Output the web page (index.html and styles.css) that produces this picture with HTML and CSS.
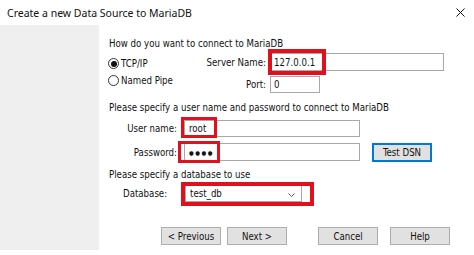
FILE: index.html
```html
<!DOCTYPE html>
<html>
<head>
<meta charset="utf-8">
<link rel="stylesheet" href="styles.css">
</head>
<body>
<div class="window">
  <div class="titlebar">
    <span class="title">Create a new Data Source to MariaDB</span>
    <svg class="close" width="9" height="9" viewBox="0 0 9 9"><path d="M0.5 0.5 L8.5 8.5 M8.5 0.5 L0.5 8.5" stroke="#111" stroke-width="1" fill="none"/></svg>
  </div>
  <div class="main">
    <div class="side"></div>
    <div class="content">
      <p class="q q1">How do you want to connect to MariaDB</p>
      <div class="conn">
        <div class="radios">
          <div class="radio"><span class="dot checked"></span>TCP/IP</div>
          <div class="radio"><span class="dot"></span>Named Pipe</div>
        </div>
        <div class="fields">
          <span class="lbl">Server Name:</span>
          <span class="tb server">127.0.0.1<span class="hl hl-server"></span></span>
          <span class="lbl">Port:</span>
          <span class="tb port">0</span>
        </div>
      </div>
      <p class="q q2">Please specify a user name and password to connect to MariaDB</p>
      <div class="form-row row-user">
        <span class="lbl">User name:</span>
        <span class="tb wide">root<span class="hl hl-user"></span></span>
      </div>
      <div class="form-row row-pass">
        <span class="lbl">Password:</span>
        <span class="tb wide pass"><span class="dots">●●●●</span><span class="hl hl-pass"></span></span>
        <span class="btn test">Test DSN</span>
      </div>
      <p class="q q3">Please specify a database to use</p>
      <div class="form-row row-db">
        <span class="lbl db-lbl">Database:</span>
        <span class="combo">test_db
          <svg class="chev" width="7" height="4" viewBox="0 0 7 4"><path d="M0.5 0.5 L3.5 3.5 L6.5 0.5" stroke="#555" stroke-width="1" fill="none"/></svg>
          <span class="hl hl-db"></span>
        </span>
      </div>
      <div class="buttons">
        <span class="btn">&lt; Previous</span>
        <span class="btn">Next &gt;</span>
        <span class="btn cancel">Cancel</span>
        <span class="btn">Help</span>
      </div>
    </div>
  </div>
</div>
</body>
</html>
```

FILE: styles.css
```css
* { box-sizing: border-box; }
html, body { margin: 0; padding: 0; background: #fff; }
body {
  width: 474px;
  height: 255px;
  overflow: hidden;
  font-family: "DejaVu Sans Condensed", "DejaVu Sans", sans-serif;
  font-size: 9.6px;
  color: #111;
}
.window { width: 474px; height: 255px; background: #fff; }
.titlebar {
  height: 25px;
  display: flex;
  align-items: center;
  justify-content: space-between;
  padding: 0 9px 0 7px;
}
.title {
  font-family: "Noto Sans", sans-serif;
  font-size: 10.5px;
  color: #111;
  margin-top: 1px;
}
.close { margin-top: -1px; }
.main { display: flex; height: 225px; }
.side { width: 99px; height: 225px; background: #efefef; }
.content { flex: 1; padding-left: 10px; display: flex; flex-direction: column; }
.q { margin: 0; height: 14px; line-height: 14px; white-space: nowrap; }
.q1 { margin-top: 12px; }
.conn { display: flex; margin-top: 2px; height: 40px; }
.radios { width: 98px; flex: none; padding-top: 2px; margin-left: -1px; }
.radio { height: 17px; display: flex; align-items: center; white-space: nowrap; }
.dot {
  width: 11px; height: 11px;
  border: 1px solid #333;
  border-radius: 50%;
  margin-right: 2px;
  display: flex; align-items: center; justify-content: center;
}
.dot.checked::after {
  content: "";
  width: 6px; height: 6px; border-radius: 50%; background: #111;
}
.lbl { white-space: nowrap; }
.fields {
  display: grid;
  grid-template-columns: 60px auto;
  grid-template-rows: 18px 17px;
  row-gap: 5px;
  column-gap: 4px;
  align-items: center;
  justify-items: start;
}
.fields .lbl { justify-self: end; }
.tb {
  position: relative;
  display: flex;
  align-items: center;
  border: 1px solid #a8a8a8;
  background: #fff;
  padding-left: 3px;
  height: 100%;
}
.server { width: 174px; }
.port { width: 50px; }
.q2 { margin-top: 8px; }
.form-row {
  display: grid;
  grid-template-columns: 68px 176px auto;
  column-gap: 7px;
  align-items: center;
  justify-items: start;
}
.form-row .lbl { justify-self: end; }
.row-user { margin-top: 5px; height: 17px; }
.row-pass { margin-top: 6px; height: 19px; }
.row-pass .tb { height: 18px; align-self: start; }
.tb.wide { width: 176px; padding-left: 4px; }
.dots { font-size: 6px; letter-spacing: 1.5px; margin-top: 1px; }
.btn {
  display: flex; align-items: center; justify-content: center;
  width: 60px; height: 18px;
  background: #e1e1e1;
  border: 1px solid #adadad;
  white-space: nowrap;
}
.test {
  height: 19px;
  margin-left: 5px;
  border: 1px solid #0078d7;
  box-shadow: inset 0 0 0 1px #0078d7;
}
.q3 { margin-top: 6px; }
.row-db { margin-top: 3px; height: 17px; }
.row-db .db-lbl { justify-self: start; margin-left: 14px; }
.combo {
  position: relative;
  width: 117px; height: 17px;
  border: 1px solid #a8a8a8;
  display: flex; align-items: center;
  padding-left: 4px;
  margin-left: 1px;
}
.chev { position: absolute; right: 6px; top: 7px; }
.buttons { display: flex; margin-top: 25px; margin-left: 52px; }
.buttons .btn + .btn { margin-left: 6px; }
.buttons .cancel { margin-left: 31px !important; }
.buttons .cancel + .btn { margin-left: 12px; }
.hl {
  position: absolute;
  border: 4px solid #e0111c;
  pointer-events: none;
}
.hl-server { left: -3px; top: -5px; width: 58px; height: 26px; }
.hl-user { left: -4px; top: -4px; width: 36px; height: 21px; border-width: 3px; }
.hl-pass { left: -7px; top: -3px; width: 42px; height: 22px; border-width: 3px; }
.hl-db { left: -5px; top: -4px; width: 133px; height: 24px; }
```
